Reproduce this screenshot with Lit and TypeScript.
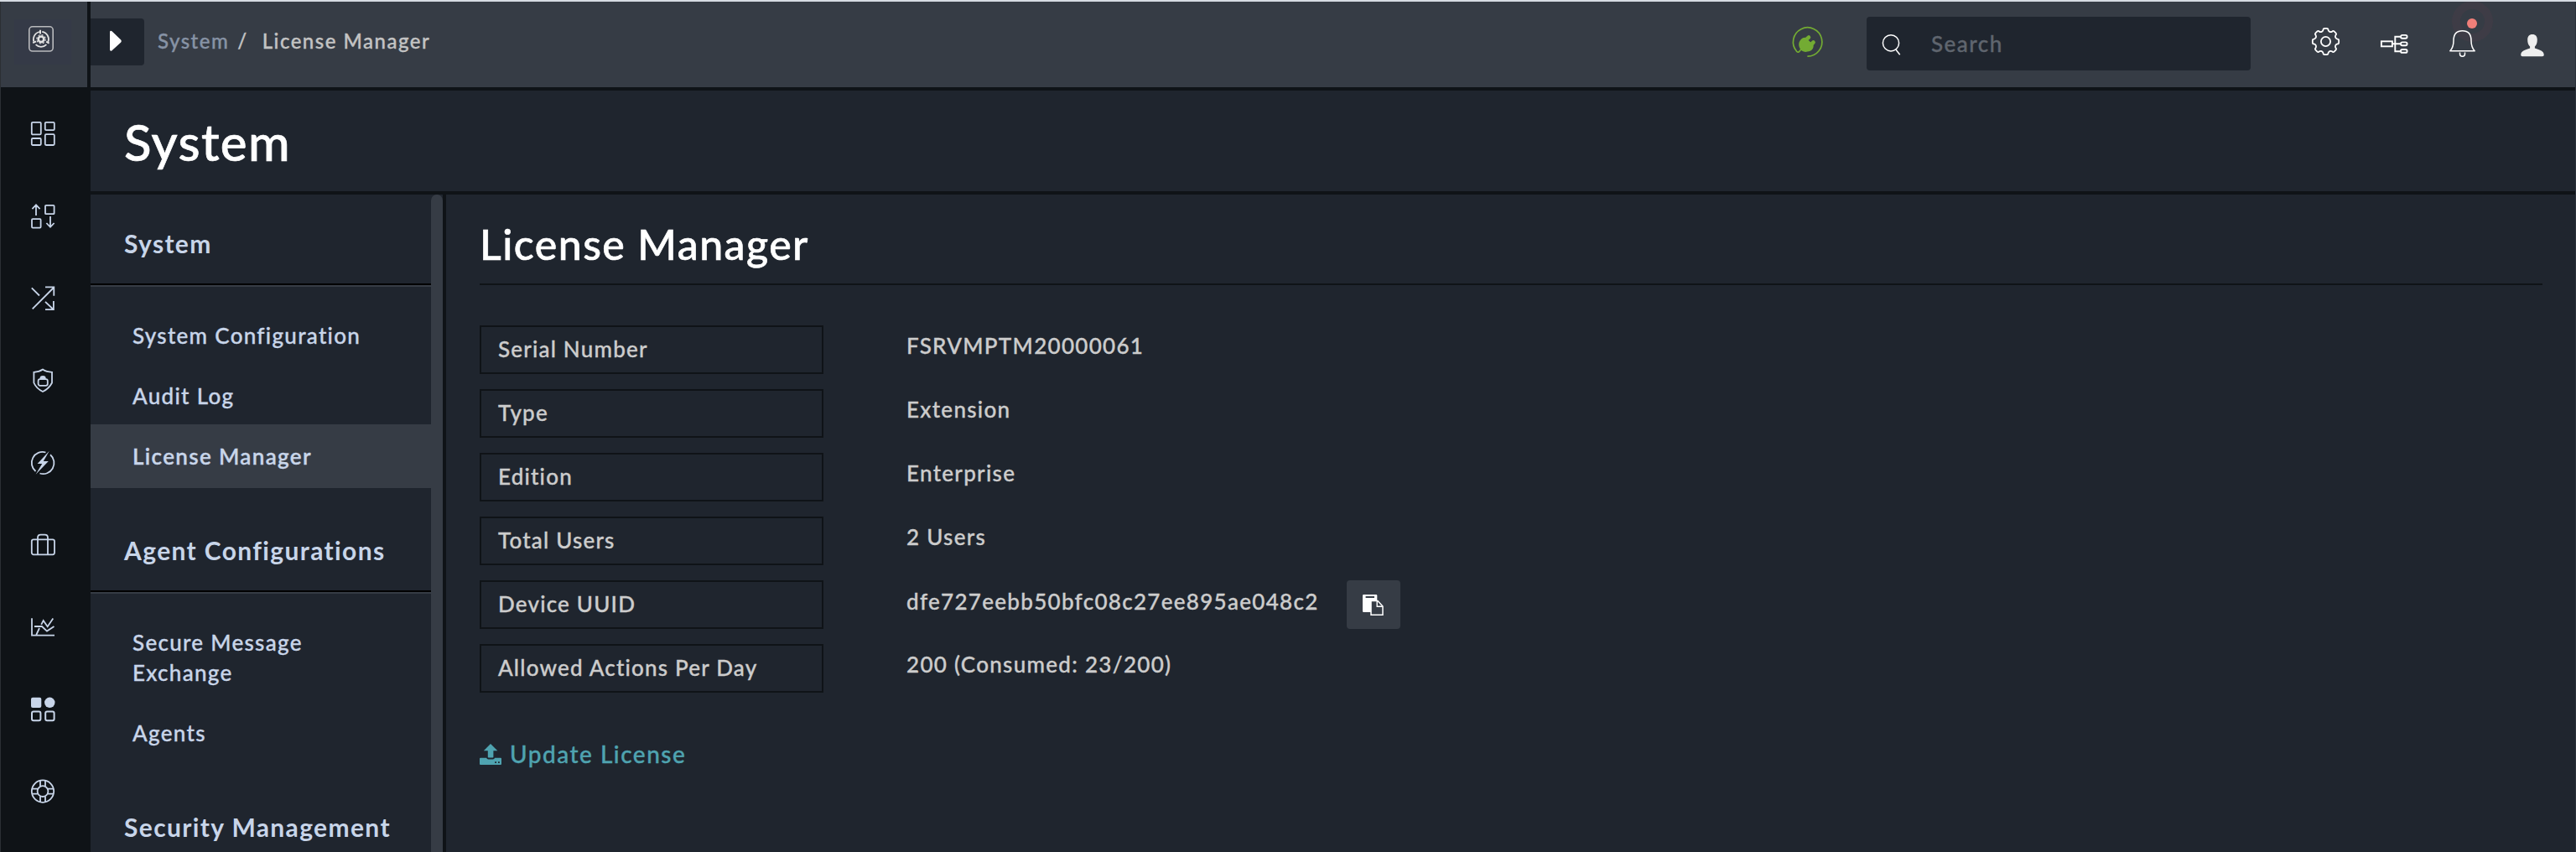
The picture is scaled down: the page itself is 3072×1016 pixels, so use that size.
import { LitElement, html, svg, css } from "lit";
import { customElement } from "lit/decorators.js";

const railIcons = [
  // dashboard
  svg`<rect x=".8" y=".8" width="11" height="14.6" rx="1.2"/><rect x="16.8" y=".8" width="11" height="9.4" rx="1.2"/>
      <rect x=".8" y="20" width="11" height="8" rx="1.2"/><rect x="16.8" y="15.2" width="11" height="12.8" rx="1.2"/>`,
  // queue
  svg`<path d="M6 14V1.6M1.4 6.2 6 1.4l4.6 4.8M23 15v12.6M18.4 23l4.6 4.8 4.6-4.8"/>
      <rect x="17" y="1.8" width="10.6" height="10.4" rx="1"/><rect x="1" y="18.2" width="10.6" height="10.4" rx="1"/>`,
  // shuffle
  svg`<path d="M.8 2.3 10 11.5M1.7 27.3 27 2M17 1.4h10.3v10.3M17 18.8l9.6 9.2M17 28.2h9.9V18"/>`,
  // shield with lock
  svg`<path d="M14 1.6C10.6 4 7 4.7 3.4 4.9V17.5C5.6 22.6 9.4 25.8 14 28c4.6-2.2 8.4-5.4 11-10.5V4.9C21 4.7 17.4 4 14 1.6Z"/>
      <rect x="8.6" y="13.2" width="11.2" height="7.6" rx="2"/><path d="M11.4 13v-.8c0-3 5.400-3 5.400 0v.8Z" class="fill"/>`,
  // bolt in circle
  svg`<path d="M17.500 2.500A13 13 0 0 0 5.500 25M10.500 27.500A13 13 0 0 0 23 5.300"/>
      <path d="M21.800.8 7.600 16h5.600L5.600 28.800 20.800 13h-6Z" class="fill" stroke="none"/>`,
  // briefcase
  svg`<rect x=".8" y="8.300" width="27.200" height="18" rx="2.200"/><path d="M8 26.300V6.200C8 4 9.300 2.700 11.500 2.700h5C18.700 2.700 20 4 20 6.200v20.100"/>`,
  // chart
  svg`<path d="M1 4.300V24.700H28M4 14h9l6 5.600 8.500-5.600M6.300 24 10 16M12.200 11.800 14.700 7l5 7.200 6.600-9.800"/>`,
  // widgets
  svg`<rect x="0" y=".7" width="12.300" height="12.300" rx="2" class="fill" stroke="none"/><circle cx="22.300" cy="6.800" r="6.200" class="fill" stroke="none"/>
      <g stroke-width="2"><rect x="1" y="17.400" width="10.400" height="10.800" rx="2"/><rect x="17.200" y="17.400" width="10.400" height="10.800" rx="2"/></g>`,
  // life ring
  svg`<circle cx="14" cy="14.600" r="13.200"/><circle cx="14" cy="14.600" r="6.400"/>
      <path d="M11 1.800v7M17 1.800v7M11 20.400v7M17 20.400v7M1.200 11.600h7M1.200 17.600h7M19.800 11.600h7M19.800 17.600h7"/>`,
];

const gearPath = (() => {
  const p = (r: number, deg: number) => {
    const a = ((deg - 90) * Math.PI) / 180;
    return `${(16.5 + r * Math.cos(a)).toFixed(2)} ${(16.5 + r * Math.sin(a)).toFixed(2)}`;
  };
  let d = "";
  for (let i = 0; i < 8; i++) {
    const c = i * 45;
    d += `${i ? "L" : "M"}${p(14.2, c - 12)}Q${p(15.9, c - 11)} ${p(15.7, c - 5)}L${p(15.7, c + 5)}Q${p(15.9, c + 11)} ${p(14.2, c + 12)}Q${p(11.2, c + 22.5)} ${p(14.2, c + 33)}`;
  }
  return d + "Z";
})();

interface Section { title: string; items: string[]; }
const sections: Section[] = [
  { title: "System", items: ["System Configuration", "Audit Log", "License Manager"] },
  { title: "Agent Configurations", items: ["Secure Message Exchange", "Agents"] },
  { title: "Security Management", items: [] },
];

const details: [string, string][] = [
  ["Serial Number", "FSRVMPTM20000061"],
  ["Type", "Extension"],
  ["Edition", "Enterprise"],
  ["Total Users", "2 Users"],
  ["Device UUID", "dfe727eebb50bfc08c27ee895ae048c2"],
  ["Allowed Actions Per Day", "200 (Consumed: 23/200)"],
];

@customElement("app-root")
class AppRoot extends LitElement {
  static styles = css`
    :host { display: block; }
    * { box-sizing: border-box; }
    svg { display: block; flex: none; overflow: visible; }
    .page {
      display: flex; width: 100%; height: 1016px; overflow: hidden; background: #1f252e;
      border-top: 2px solid #d6dbe2; color: #cccccc;
      font: 500 26px/36px Lato, "Liberation Sans", sans-serif; letter-spacing: 1.3px;
      -webkit-text-stroke: .35px currentColor;
    }
    .rail { width: 108px; flex: none; background: #0f1317; border-left: 1px solid #2b2f34; }
    .logo { width: 103px; height: 102px; background: #363c45; padding: 21px 0 0 16px; }
    .logo-tile { width: 68px; height: 54px; background: #353a47; padding: 8px 0 0 17px; }
    .rail-nav { display: flex; flex-direction: column; gap: 69px; padding: 41px 0 0 36px; }
    .rail-nav svg { fill: none; stroke: #c8d5e9; stroke-width: 1.8; }
    .rail-nav .fill { fill: #c8d5e9; }

    .main { flex: 1; min-width: 0; display: flex; flex-direction: column; border-right: 1px solid #2b313a; }
    .header { height: 102px; flex: none; display: flex; align-items: flex-start; background: #363c45; padding-right: 37px; }
    .toggle { width: 64px; height: 56px; margin-top: 20px; padding: 14px 0 0 23px; background: #1f252e; border-radius: 0 4px 4px 0; }
    .crumbs { display: flex; flex: 1; margin: 31px 0 0 16px; font-size: 24px; line-height: 32px; letter-spacing: 1.5px; color: #c3c3c3; }
    .crumb-root { color: #8793a5; }
    .crumb-sep { margin: 0 17px 0 10px; }
    .plug { margin: 30px 52px 0 0; }
    .search { width: 458px; height: 64px; margin: 18px 73px 0 0; display: flex; background: #1f252e; border-radius: 4px; padding: 14px 0 0 19px; color: #5f656e; letter-spacing: 1.5px; }
    .search svg { margin: 7px 37px 0 0; }
    .gear { margin: 31px 49px 0 0; }
    .tree { margin: 39px 49px 0 0; }
    .bell { position: relative; margin: 34px 54px 0 0; }
    .pulse { position: absolute; left: 3px; top: -35px; width: 49px; height: 49px; border: 10px solid #3e3c46; border-radius: 50%; }
    .dot { position: absolute; left: 21px; top: -14px; width: 12px; height: 12px; border-radius: 50%; background: #f07f79; }
    .bell svg { position: relative; }
    .user { margin-top: 38px; }

    .title { height: 128px; flex: none; border: solid #0f1317; border-width: 4px 0; padding: 25px 40px 0; font-size: 60px; line-height: 72px; letter-spacing: 1.4px; color: #fff; -webkit-text-stroke-width: .7px; }
    .body { flex: 1; min-height: 0; display: flex; }
    .side { width: 406px; flex: none; overflow: hidden; color: #c8d5e9; }
    .side-title { height: 110px; padding: 37px 0 0 40px; font-size: 30px; line-height: 42px; font-weight: 700; letter-spacing: 1.36px; -webkit-text-stroke-width: 0; border-bottom: 2px solid #363c45; box-shadow: inset 0 -2px #000; white-space: nowrap; }
    .side-list { padding: 22px 0 18px; }
    .side-item { padding: 18px 70px 18px 50px; }
    .side-item.active { background: #363c45; margin: -2px 0; padding: 20px 50px; font-weight: 600; letter-spacing: 1.35px; }
    .scroll { width: 14px; flex: none; background: #363c45; border-radius: 7px 7px 0 0; }
    .content { flex: 1; border-left: 4px solid #0f1317; padding: 29px 39px 0 40px; }
    .content-title { height: 79px; border-bottom: 2px solid #0f1317; font-size: 50px; line-height: 60px; letter-spacing: 1.46px; color: #fff; -webkit-text-stroke-width: .6px; }
    .rows { display: flex; flex-direction: column; gap: 18px; margin-top: 48px; }
    .row { display: flex; height: 58px; }
    .label { width: 410px; border: 2px solid #0f1317; padding: 8px 0 0 20px; letter-spacing: 1.2px; }
    .value { width: 525px; margin-left: 99px; padding-top: 6px; white-space: nowrap; }
    .value.tall { padding-top: 7px; }
    .copy { width: 64px; height: 58px; border-radius: 4px; background: #363c45; padding: 17px 0 0 19px; }
    .update { display: flex; gap: 10px; margin-top: 53px; font-size: 28px; line-height: 40px; letter-spacing: 1.5px; color: #4fa3b0; }
    .update svg { margin-top: 8px; }
  `;

  private header() {
    return html`
      <div class="header">
        <div class="toggle"><svg width="14" height="26" viewBox="0 0 14 26"><path d="M0 2.200C0 .8 1.500.2 2.500 1.300L13.200 11.600Q14.500 13 13.200 14.400L2.500 24.200C1.500 25.300 0 24.700 0 23.300Z" fill="#fff"/></svg></div>
        <div class="crumbs"><span class="crumb-root">System</span><span class="crumb-sep">/</span><span>License Manager</span></div>
        <svg class="plug" width="36" height="36" viewBox="0 0 36 36" fill="none" stroke="#73ab33" stroke-width="1.700">
          <path d="M17.400 35.200A17.200 17.200 0 1 0 4.600 29.200Q6.500 31.500 8.500 28.500L11 25.500"/>
          <path d="M15 16 19 12.500M20.500 22.500 24.500 18.500" stroke-width="4.600" stroke-linecap="round"/>
          <path d="M10.200 14.500Q12.500 12.200 15.500 13L24.600 21.500C25.200 25.600 22.500 29.400 17.500 29.600 13.500 30.600 10 29 8.600 26 6.300 21.500 7 17.500 10.200 14.500Z" fill="#73ab33" stroke="none"/>
        </svg>
        <div class="search">
          <svg width="21" height="25" viewBox="0 0 21 25" fill="none" stroke="#fff" stroke-width="1.500"><circle cx="10" cy="10.300" r="9.600"/><path d="M15.800 18 20.700 24.200"/></svg>
          <span>Search</span>
        </div>
        <svg class="gear" width="33" height="33" viewBox="0 0 33 33" fill="none" stroke="#fff" stroke-width="1.800" stroke-linejoin="round"><path d=${gearPath}/><circle cx="16.500" cy="16.500" r="5.600"/></svg>
        <svg class="tree" width="33" height="23" viewBox="0 0 33 23" fill="none" stroke="#fff" stroke-width="1.900">
          <rect x=".9" y="8.300" width="13" height="6"/><path d="M14 11.300h10M24 2.800h-6.700v17.500H24"/>
          <rect x="24" y=".9" width="7.600" height="3.800" rx="1.900"/><rect x="24" y="9.400" width="7.600" height="3.800" rx="1.900"/><rect x="24" y="18" width="7.600" height="3.800" rx="1.900"/>
        </svg>
        <div class="bell">
          <div class="pulse"></div>
          <svg width="31" height="32" viewBox="0 0 31 32" fill="none" stroke="#fff" stroke-width="1.500" stroke-linejoin="round">
            <path d="M.8 24.700C4 21.500 5 18.500 5 12.500 5 5 8.800.8 15.500.8S26 5 26 12.500c0 6 1 9 4.200 12.200Z"/><path d="M12.500 26.500v1.800c0 4 6 4 6 0v-1.800"/>
          </svg>
          <div class="dot"></div>
        </div>
        <svg class="user" width="28" height="28" viewBox="0 0 28 28"><path d="M14 1C10 1 8.200 3.500 8.200 7.300c0 4 1 6.300 2.900 8.200v2C5 19.300.2 21 .2 25.500Q.2 27.300 2 27.300H26Q27.800 27.300 27.800 25.500C27.800 21 23 19.300 16.900 17.500v-2c1.900-1.900 2.900-4.200 2.900-8.200C19.800 3.500 18 1 14 1Z" fill="#eeeeee"/></svg>
      </div>`;
  }

  private side() {
    return html`<div class="side">${sections.map((s) => html`
      <div class="side-section">
        <div class="side-title">${s.title}</div>
        <div class="side-list">${s.items.map((i) => html`<div class="side-item ${i === "License Manager" ? "active" : ""}">${i}</div>`)}</div>
      </div>`)}</div>
      <div class="scroll"></div>`;
  }

  private content() {
    return html`<div class="content">
      <div class="content-title">License Manager</div>
      <div class="rows">${details.map(([k, v]) => {
        const copy = k === "Device UUID";
        return html`<div class="row"><div class="label">${k}</div><div class="value ${copy ? "tall" : ""}">${v}</div>
          ${copy ? html`<div class="copy"><svg width="25" height="25" viewBox="0 0 25 25">
            <path d="M1.200 0H16Q17.300 0 17.300 1.200V21H1.200Q0 21 0 19.800V1.200Q0 0 1.200 0Z" fill="#fff"/><rect x="3.600" y="2" width="10.400" height="2" fill="#363c45"/>
            <path d="M10 7.600H18L24 14V24.200H10Z" fill="#363c45" stroke="#fff" stroke-width="1.500"/><path d="M17.200 8v6.200H24" fill="none" stroke="#fff" stroke-width="1.400"/>
          </svg></div>` : ""}</div>`;
      })}</div>
      <div class="update">
        <svg width="26" height="25" viewBox="0 0 26 25" fill="#4fa3b0"><path d="M13 0 21.300 8.300H16.400V15.800Q16.400 16.600 15.600 16.600H10.600Q9.800 16.600 9.800 15.800V8.300H4.800Z"/>
        <path fill-rule="evenodd" d="M1 16.800H8.200Q8.600 18.600 10.400 18.600H15.800Q17.600 18.600 18 16.800H25Q26 16.800 26 17.800V24Q26 25 25 25H1Q0 25 0 24V17.800Q0 16.800 1 16.800ZM18.200 21.300v1.800H20v-1.800ZM22 21.300v1.800h1.800v-1.800Z"/></svg>
        <span>Update License</span>
      </div>
    </div>`;
  }

  render() {
    return html`<div class="page">
      <div class="rail">
        <div class="logo"><div class="logo-tile">
          <svg width="30" height="31" viewBox="0 0 30 31" fill="none" stroke="#e2e2e2">
            <rect x=".8" y=".8" width="28.400" height="29.200" rx="4" stroke-width="1.600" stroke="#b9babd"/>
            <circle cx="15" cy="15.800" r="3.300" stroke-width="2.600"/>
            <circle cx="15" cy="15.800" r="5.200" stroke-width="1.200" stroke-dasharray="2 2.080"/>
            <path d="M16.200 6.900A9 9 0 0 1 23.400 19M21.400 22.200A9 9 0 0 1 8.600 22.200M6.300 18.600A9 9 0 0 1 13 7" stroke-width="1.700"/>
            <path d="M14 4.800v4.600M24.600 20.600l-3.400-2M5.200 20l3.800-1.600" stroke-width="2"/>
          </svg></div></div>
        <div class="rail-nav">${railIcons.map((i) => html`<svg width="29" height="29" viewBox="0 0 29 29">${i}</svg>`)}</div>
      </div>
      <div class="main">
        ${this.header()}
        <div class="title">System</div>
        <div class="body">${this.side()}${this.content()}</div>
      </div>
    </div>`;
  }
}
